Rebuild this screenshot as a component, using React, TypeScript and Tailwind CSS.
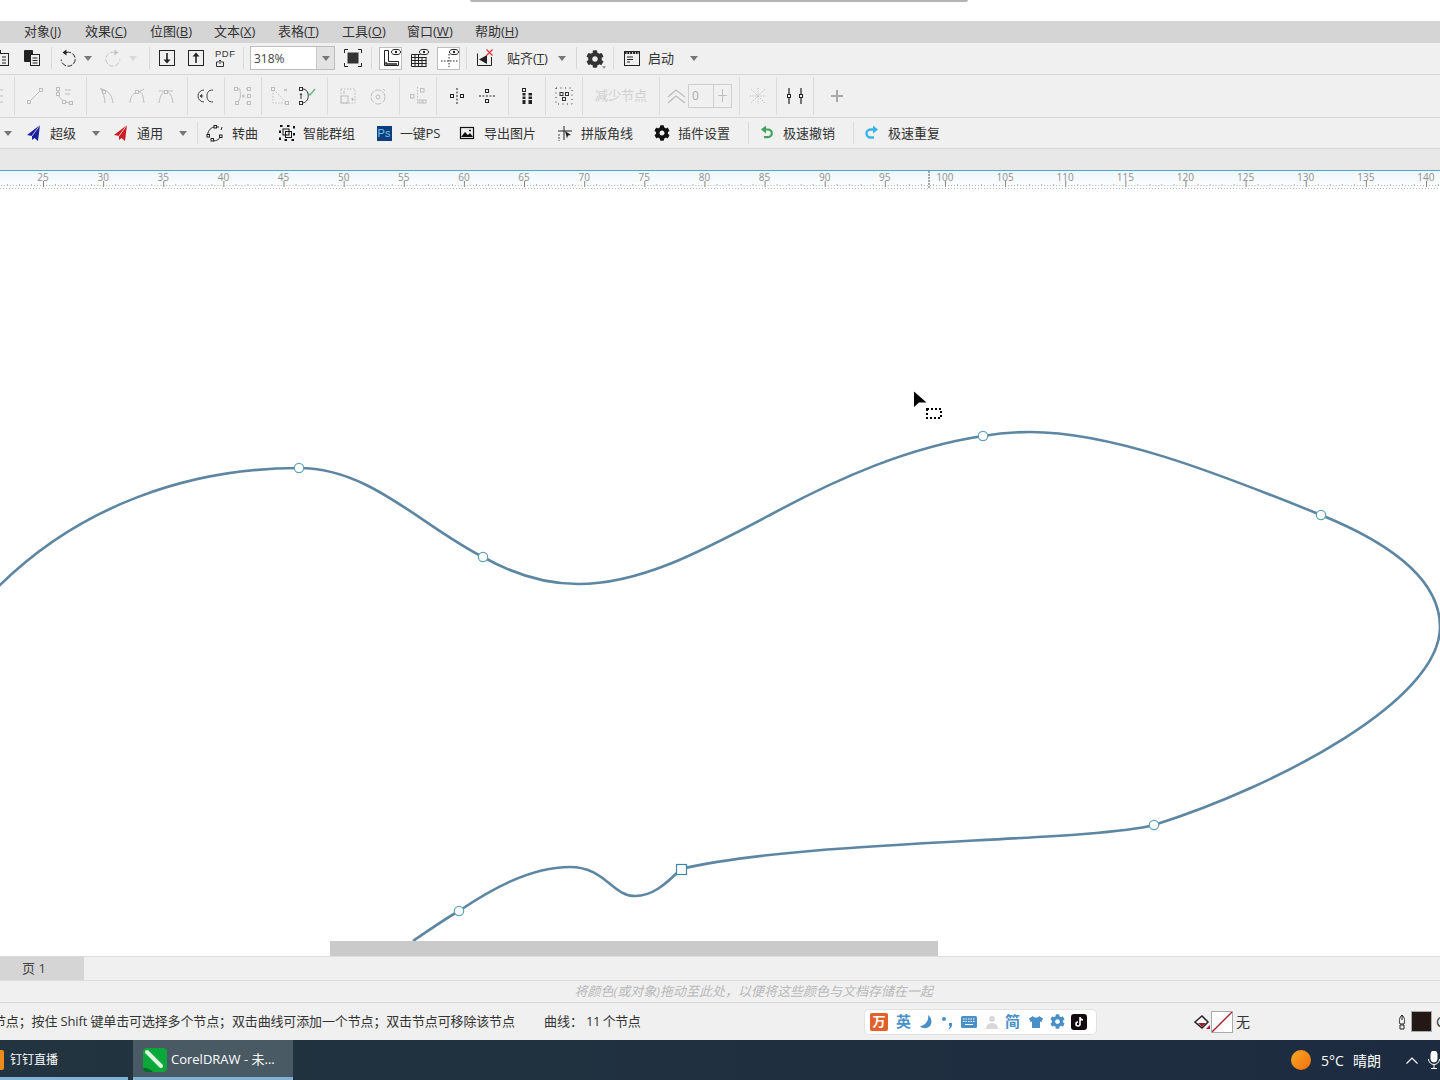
import type { ReactNode } from "react"
import { FaCog } from "react-icons/fa"

const menus = [
  { zh: "对象", key: "J", w: "w-[61px]" },
  { zh: "效果", key: "C", w: "w-[65px]" },
  { zh: "位图", key: "B", w: "w-[64px]" },
  { zh: "文本", key: "X", w: "w-[64px]" },
  { zh: "表格", key: "T", w: "w-[64px]" },
  { zh: "工具", key: "O", w: "w-[65px]" },
  { zh: "窗口", key: "W", w: "w-[68px]" },
  { zh: "帮助", key: "H", w: "w-[60px]" },
]

const rulerValues = Array.from({ length: 24 }, (_, i) => 25 + i * 5)

function Ico({ className = "", children }: { className?: string; children: ReactNode }) {
  return (
    <svg viewBox="0 0 20 20" fill="none" stroke="currentColor" className={`h-5 w-5 shrink-0 ${className}`}>
      {children}
    </svg>
  )
}

function Sep({ className = "" }: { className?: string }) {
  return <div className={`h-[22px] w-px shrink-0 bg-[#d9d9d9] ${className}`} />
}

function Sep2({ className = "" }: { className?: string }) {
  return <div className={`h-[38px] w-px shrink-0 bg-[#dcdcdc] ${className}`} />
}

function Drop({ className = "" }: { className?: string }) {
  return (
    <svg viewBox="0 0 8 5" className={`h-[5px] w-2 shrink-0 fill-current ${className}`}>
      <path d="M0 0h8L4 5z" />
    </svg>
  )
}

function Node({ x, y, s = 3 }: { x: number; y: number; s?: number }) {
  return <rect x={x - s / 2} y={y - s / 2} width={s} height={s} fill="#f0f0f0" />
}

function Eye() {
  return (
    <>
      <ellipse cx="15" cy="4" rx="4.5" ry="2.6" fill="#fff" strokeWidth="1" />
      <circle cx="15" cy="4" r="1.2" fill="currentColor" stroke="none" />
    </>
  )
}

function Plane({ className = "" }: { className?: string }) {
  return (
    <Ico className={className}>
      <path d="M16 2 L3 12 L8 13 L8 17 L10.5 15 L14 18 Z" fill="currentColor" stroke="none" />
      <path d="M16 2 L8 13" stroke="#fff" strokeWidth="0.7" />
    </Ico>
  )
}

function ToolText({ className = "", children }: { className?: string; children: ReactNode }) {
  return <span className={`shrink-0 whitespace-nowrap text-[13px] leading-none text-[#333] ${className}`}>{children}</span>
}

function MenuBar() {
  return (
    <div className="flex h-[22px] items-center bg-[#d5d5d5] pl-[24px] text-[13px] text-[#333]">
      {menus.map((m) => (
        <span key={m.zh} className={`${m.w} shrink-0 whitespace-nowrap`}>
          {m.zh}(<span className="underline">{m.key}</span>)
        </span>
      ))}
    </div>
  )
}

function TopToolbar() {
  return (
    <div className="flex h-[32px] items-center border-b border-[#d6d6d6] bg-[#f0f0f0] text-[#222]">
      <Ico className="-ml-[8px]">
        <rect x="2" y="2" width="7" height="10" fill="currentColor" stroke="none" />
        <rect x="7.5" y="5.5" width="9" height="12" fill="#f0f0f0" />
        <path d="M10 9h4M10 12h4M10 15h4" />
      </Ico>
      <Ico className="ml-[10px]">
        <rect x="2" y="2" width="9" height="12" rx="1" fill="currentColor" stroke="none" />
        <rect x="8.5" y="6.5" width="9" height="11" fill="#f0f0f0" />
        <path d="M10.5 10h5M10.5 12.5h5M10.5 15h5" />
      </Ico>
      <Sep className="ml-[9px]" />
      <Ico className="ml-[6px]">
        <path d="M8 4.5 A7 7 0 1 1 3.2 11.500" strokeDasharray="5 1.6" />
        <path d="M8.5 1.500 V7.5 L4.500 4.500 Z" fill="currentColor" stroke="none" />
      </Ico>
      <Drop className="ml-[6px] text-[#777]" />
      <Ico className="ml-[11px] text-[#c4c4c4]">
        <path d="M12 4.5 A7 7 0 1 0 16.8 11.500" strokeDasharray="5 1.6" />
        <path d="M11.5 1.500 V7.5 L15.500 4.500 Z" fill="currentColor" stroke="none" />
      </Ico>
      <Drop className="ml-[6px] text-[#d8d8d8]" />
      <Sep className="ml-[12px]" />
      <Ico className="ml-[7px]">
        <rect x="2.5" y="2.5" width="15" height="15" />
        <path d="M10 5v9" strokeWidth="1.6" />
        <path d="M6.5 11.5h7L10 15.5z" fill="currentColor" stroke="none" />
      </Ico>
      <Ico className="ml-[9px]">
        <rect x="2.5" y="2.5" width="15" height="15" />
        <path d="M10 15V6" strokeWidth="1.6" />
        <path d="M6.5 8.5h7L10 4.5z" fill="currentColor" stroke="none" />
      </Ico>
      <div className="relative ml-[8px] h-5 w-5 shrink-0">
        <span className="absolute left-[1px] top-[1px] font-['Liberation_Sans'] text-[9.5px] leading-none tracking-[0.5px] text-[#333]">PDF</span>
        <svg viewBox="0 0 8 8" fill="none" stroke="#333" className="absolute left-[2px] top-[11px] h-2 w-2">
          <path d="M.5 3v4.5h7V3M.5 3h2M5.5 3h2M4 5V1M2.5 2.5 4 1l1.5 1.5" />
        </svg>
      </div>
      <Sep className="ml-[9px]" />
      <div className="ml-[6px] flex h-[24px] w-[85px] shrink-0 border border-[#bdbdbd] bg-white">
        <span className="flex-1 pl-[3px] text-[12px] leading-[24px] text-[#444]">318%</span>
        <div className="flex w-[18px] items-center justify-center border-l border-[#c8c8c8] bg-[#e3e3e3]">
          <Drop className="text-[#777]" />
        </div>
      </div>
      <Ico className="ml-[8px]">
        <rect x="4.5" y="4.5" width="11" height="11" fill="#333" stroke="none" />
        <path d="M1.5 5V1.5H5M15 1.5h3.5V5M1.5 15v3.5H5M15 18.5h3.5V15" />
      </Ico>
      <Sep className="ml-[8px]" />
      <div className="ml-[7px] flex h-[23px] w-[23px] shrink-0 items-center justify-center border border-[#bdbdbd] bg-white">
        <Ico>
          <path d="M3.5 2.5v15h14v-4H7.5V2.5z" />
          <path d="M5 14v2h11" strokeWidth="1.4" />
          <Eye />
        </Ico>
      </div>
      <Ico className="ml-[7px]">
        <path d="M2.5 6.5h9M2.5 9.5h15M2.5 12.5h15M2.5 15.5h15M2.5 18.5h15M2.5 6.5v12M6 6.5v12M9.5 6.5v12M13 9.5v9M17 9.5v9" />
        <Eye />
      </Ico>
      <div className="ml-[8px] flex h-[23px] w-[23px] shrink-0 items-center justify-center border border-[#bdbdbd] bg-white">
        <Ico>
          <path d="M10 6v13M2 13h17" strokeDasharray="1.5 1.5" />
          <Eye />
        </Ico>
      </div>
      <Sep className="ml-[6px]" />
      <Ico className="ml-[8px]">
        <path d="M2.5 5.5v12h14V9" />
        <path d="M4 11.5l8-4.5v9z" fill="currentColor" stroke="none" />
        <path d="M11.5 1.5l6 6M17.5 1.5l-6 6" stroke="#d9383a" strokeWidth="1.2" />
      </Ico>
      <ToolText className="ml-[12px] w-[41px]">
        贴齐(<span className="underline">T</span>)
      </ToolText>
      <Drop className="ml-[10px] text-[#777]" />
      <Sep className="ml-[10px]" />
      <div className="relative ml-[8px] mt-[2px] flex h-5 w-5 shrink-0 items-center justify-center">
        <FaCog className="h-[18px] w-[18px] text-[#333]" />
        <Drop className="absolute -bottom-[1px] -right-[1px] h-[4px] w-[4px] text-[#888]" />
      </div>
      <Sep className="ml-[8px]" />
      <Ico className="ml-[8px]">
        <rect x="2.5" y="3.5" width="15" height="14" />
        <path d="M2.5 5h15" strokeWidth="2" strokeDasharray="2 0.8" />
        <path d="M5 9h6M5 11.5h6M5 14h3" />
      </Ico>
      <ToolText className="ml-[6px] w-[27px]">启动</ToolText>
      <Drop className="ml-[15px] text-[#777]" />
    </div>
  )
}

function NodeToolbar() {
  return (
    <div className="flex h-[43px] items-center border-b border-[#d6d6d6] bg-[#f0f0f0] text-[#bdbdbd]">
      <Ico className="-ml-[12px]">
        <path d="M12 4h3M12 10h3M12 16h3" />
      </Ico>
      <Sep2 className="ml-[6px]" />
      <Ico className="ml-[10px]">
        <path d="M4 16 16 4" />
        <Node x={4} y={16} />
        <Node x={16} y={4} />
      </Ico>
      <Ico className="ml-[10px]">
        <path d="M3 3c0 9 3 12 12 14" />
        <Node x={3} y={3} />
        <Node x={3} y={8} />
        <Node x={9} y={16} />
        <Node x={16} y={17} />
        <path d="M10 4h6M10 8h5" />
      </Ico>
      <Sep2 className="ml-[11px]" />
      <Ico className="ml-[10px]">
        <path d="M4 3c7 1 11 6 12 14M4 3c2 4 4 9 4 14M7 5 3 2" />
        <Node x={7} y={6} />
      </Ico>
      <Ico className="ml-[10px]">
        <path d="M3 17c0-6 3-10 8-11s5 5 6 11M8 8l9-5" />
        <Node x={10} y={6} />
      </Ico>
      <Ico className="ml-[9px]">
        <path d="M3 17C4 10 6 6 10 6s6 4 7 11M3 5h14" />
        <Node x={10} y={6} />
      </Ico>
      <Sep2 className="ml-[11px]" />
      <Ico className="ml-[8px] text-[#444]">
        <path d="M8 4a6 6 0 0 0 0 12M17 4c-5 0-6 3-6 6s1 6 6 6" />
        <path d="M4 10l2-1.5v3z" fill="currentColor" />
      </Ico>
      <Sep2 className="ml-[8px]" />
      <Ico className="ml-[8px]">
        <path d="M3 3h4c0 5 2 9-3 14M17 3h-4M17 17h-4" />
        <Node x={3} y={3} />
        <Node x={16} y={3} />
        <Node x={4} y={17} />
        <Node x={16} y={17} />
        <Node x={16} y={10} />
        <path d="M9 10l2-1.5v3z" />
      </Ico>
      <Sep2 className="ml-[8px]" />
      <Ico className="ml-[8px]">
        <path d="M3 4v13h14" strokeDasharray="1.5 1.5" />
        <path d="M4 4l13 13" strokeDasharray="1.5 1.5" />
        <Node x={3} y={3} />
        <Node x={17} y={17} />
        <path d="M14 3l3 2M17 3l-3 2" />
      </Ico>
      <Ico className="ml-[8px] text-[#333]">
        <path d="M3 3h2c6 0 8 12 0 14H3" />
        <Node x={3} y={3} />
        <Node x={3} y={17} />
        <path d="M3 8v5M2 9l1-1.5L4 9" />
        <path d="M10 7l2 2 5-6" stroke="#5db585" strokeWidth="1.2" />
      </Ico>
      <Sep2 className="ml-[9px]" />
      <Ico className="ml-[10px]">
        <rect x="3" y="3" width="14" height="14" strokeDasharray="1.5 1.5" />
        <rect x="3" y="10" width="7" height="7" />
        <path d="M6 5v3M13 13h3M14.5 12v3" />
      </Ico>
      <Ico className="ml-[10px]">
        <circle cx="10" cy="11" r="7" strokeDasharray="6 1.5" />
        <circle cx="10" cy="11" r="2" />
        <path d="M15 3l2 2" />
      </Ico>
      <Sep2 className="ml-[11px]" />
      <Ico className="ml-[8px]">
        <rect x="2.5" y="8.5" width="3.5" height="3.5" />
        <rect x="12.5" y="2.5" width="3.5" height="3.5" />
        <rect x="11" y="14" width="3" height="3" />
        <rect x="15" y="14" width="3" height="3" />
        <path d="M9.5 1v18" strokeDasharray="1.5 1.5" />
      </Ico>
      <Sep2 className="ml-[8px]" />
      <Ico className="ml-[10px] text-[#222]">
        <rect x="3.5" y="8.5" width="3" height="3" />
        <rect x="13.5" y="8.5" width="3" height="3" />
        <path d="M10 2v16" strokeDasharray="2 1.5" />
      </Ico>
      <Ico className="ml-[10px] text-[#222]">
        <rect x="8.5" y="3.5" width="3" height="3" />
        <rect x="8.5" y="13.5" width="3" height="3" />
        <path d="M2 10h16" strokeDasharray="2 1.5" />
      </Ico>
      <Sep2 className="ml-[11px]" />
      <Ico className="ml-[8px] text-[#222]">
        <rect x="5.5" y="2.5" width="3" height="3" />
        <rect x="5.5" y="7" width="3" height="11" fill="currentColor" stroke="none" />
        <rect x="11.5" y="7" width="3.5" height="11" fill="currentColor" stroke="none" />
        <path d="M5 10h4M5 13.5h4M11 10h5M11 13.5h5" stroke="#f0f0f0" />
      </Ico>
      <Sep2 className="ml-[8px]" />
      <Ico className="ml-[8px] text-[#333]">
        <rect x="6" y="6.5" width="3" height="3" />
        <rect x="11.5" y="6.5" width="3" height="3" />
        <rect x="8.5" y="11.5" width="3" height="3" />
        <path d="M2 2h16v16H2z" strokeDasharray="1 3.5" />
      </Ico>
      <Sep2 className="ml-[8px]" />
      <span className="ml-[12px] w-[53px] shrink-0 whitespace-nowrap text-[13px] text-[#cfcfcf]">减少节点</span>
      <Sep2 className="ml-[11px]" />
      <Ico className="ml-[7px]">
        <path d="M1 11l8-7 9 7M1 17l8-7 9 7" strokeWidth="1.3" />
      </Ico>
      <div className="ml-[1px] flex h-[24px] w-[44px] shrink-0 border border-[#cfcfcf]">
        <span className="flex-1 pl-[3px] text-[12px] leading-[22px] text-[#aaa]">0</span>
        <div className="flex w-[18px] items-center justify-center border-l border-[#cfcfcf]">
          <svg viewBox="0 0 9 15" fill="none" stroke="currentColor" className="h-[15px] w-[9px]">
            <path d="M4.5 1v13M0 7.5h9" />
          </svg>
        </div>
      </div>
      <Sep2 className="ml-[7px]" />
      <Ico className="ml-[8px]">
        <path d="M3 3l14 14M17 3 3 17M10 2v16M2 10h16" strokeDasharray="1.2 1.4" />
      </Ico>
      <Sep2 className="ml-[8px]" />
      <Ico className="ml-[8px] text-[#222]">
        <path d="M4 2v16M16 2v16" strokeWidth="1.2" />
        <rect x="2.5" y="8.5" width="3" height="3" fill="#f0f0f0" />
        <rect x="14.5" y="8.5" width="3" height="3" fill="#f0f0f0" />
      </Ico>
      <Sep2 className="ml-[8px]" />
      <Ico className="ml-[13px] text-[#aaa]">
        <path d="M10 4v12M4 10h12" strokeWidth="2" />
      </Ico>
    </div>
  )
}

function PluginToolbar() {
  return (
    <div className="flex h-[32px] items-center border-b border-[#d6d6d6] bg-[#f0f0f0]">
      <Drop className="ml-[4px] text-[#777]" />
      <Plane className="ml-[12px] text-[#1a1f9c]" />
      <ToolText className="ml-[6px] w-[26px]">超级</ToolText>
      <Drop className="ml-[16px] text-[#777]" />
      <Plane className="ml-[11px] text-[#cc1f24]" />
      <ToolText className="ml-[6px] w-[26px]">通用</ToolText>
      <Drop className="ml-[16px] text-[#777]" />
      <Sep className="ml-[10px]" />
      <Ico className="ml-[7px] text-[#222]">
        <path d="M9 4C5 5 2 9 3 13M6 17c4 2 8 0 10-4M14 4h-2M16 7l1-3" />
        <rect x="2" y="11.5" width="2.5" height="2.5" fill="#f0f0f0" />
        <rect x="6" y="15.5" width="2.5" height="2.5" fill="#f0f0f0" />
        <rect x="14.5" y="12" width="2.5" height="2.5" fill="#f0f0f0" />
        <rect x="9" y="2.5" width="2.5" height="2.5" fill="#f0f0f0" />
      </Ico>
      <ToolText className="ml-[7px] w-[26px]">转曲</ToolText>
      <Ico className="ml-[19px] text-[#111]">
        <rect x="6" y="6" width="6" height="6" />
        <rect x="8.5" y="8.5" width="6" height="6" />
        <path d="M3 3h14v14H3z" strokeWidth="2" strokeDasharray="2.5 4.5" />
      </Ico>
      <ToolText className="ml-[6px] w-[52px]">智能群组</ToolText>
      <div className="ml-[19px] flex h-5 w-5 shrink-0 items-center justify-center">
        <div className="flex h-[15px] w-[15px] items-center justify-center bg-[#0d3f7c] font-['Liberation_Sans'] text-[11px] leading-none text-[#6fc4f2]">Ps</div>
      </div>
      <ToolText className="ml-[6px] w-[40px] tracking-[-0.2px]">一键PS</ToolText>
      <Ico className="ml-[17px] text-[#111]">
        <rect x="3.5" y="4.5" width="13" height="11" strokeWidth="1.2" />
        <path d="M4 14l4-5 3 3 2-2 3 4z" fill="currentColor" stroke="none" />
        <circle cx="13" cy="7.5" r="1" fill="currentColor" stroke="none" />
      </Ico>
      <ToolText className="ml-[7px] w-[52px]">导出图片</ToolText>
      <Ico className="ml-[19px] text-[#222]">
        <path d="M3 8h14M9 3v14" strokeWidth="1" />
        <path d="M10 8l6 4-3 .5-1 3z" fill="currentColor" stroke="none" />
        <path d="M4 11v7" stroke="#999" strokeWidth="2" strokeDasharray="2 1" />
      </Ico>
      <ToolText className="ml-[6px] w-[52px]">拼版角线</ToolText>
      <div className="ml-[19px] flex h-5 w-5 shrink-0 items-center justify-center">
        <FaCog className="h-4 w-4 text-[#111]" />
      </div>
      <ToolText className="ml-[6px] w-[52px]">插件设置</ToolText>
      <Sep className="ml-[18px]" />
      <Ico className="ml-[8px] text-[#3da35d]">
        <path d="M8 6.500h3a3.800 3.800 0 0 1 0 7.600H7" strokeWidth="2.200" />
        <path d="M9 2.500V10.500L4 6.500z" fill="currentColor" stroke="none" />
      </Ico>
      <ToolText className="ml-[6px] w-[52px]">极速撤销</ToolText>
      <Sep className="ml-[18px]" />
      <Ico className="ml-[7px] text-[#35b6e6]">
        <path d="M13 6.500H9.500a4 4 0 0 0 0 8H13" strokeWidth="2.400" />
        <path d="M12 2.500V10.500L17 6.500z" fill="currentColor" stroke="none" />
      </Ico>
      <ToolText className="ml-[7px] w-[52px]">极速重复</ToolText>
    </div>
  )
}

function Ruler() {
  const minor = Array.from({ length: 490 }, (_, i) => i * 3.0065 + 43 - 60.13)
  return (
    <div className="relative h-[19px] shrink-0 overflow-hidden border-t border-[#4aa9c9] bg-gradient-to-b from-[#eef6fa] to-white">
      <div className="ml-[13px] flex">
        {rulerValues.map((v) => (
          <span key={v} className="w-[60.13px] shrink-0 text-center text-[10px] leading-[12px] text-[#8f8f8f]">
            {v}
          </span>
        ))}
      </div>
      <svg className="absolute inset-0 h-full w-full" viewBox="0 0 1440 18">
        {minor.map((x, i) => (
          <rect key={i} x={x} y={i % 20 === 0 ? 10 : i % 4 === 0 ? 13 : 14} width="1" height={i % 20 === 0 ? 6 : i % 4 === 0 ? 2 : 1} fill="#777" opacity={i % 20 === 0 ? 0.9 : 0.55} />
        ))}
        <path d="M929 0v17" stroke="#555" strokeDasharray="2 1" />
        <path d="M0 17.500h1440" stroke="#bbb" strokeDasharray="1 2" />
      </svg>
    </div>
  )
}

function Canvas() {
  const nodes = [
    [299, 468],
    [483, 557],
    [983, 436],
    [1321, 515],
    [1154, 825],
    [459, 911],
  ]
  return (
    <div className="relative h-[767px] shrink-0 overflow-hidden bg-white">
      <svg className="absolute inset-0 h-full w-full" viewBox="0 189 1440 767" fill="none">
        <path
          d="M-3 588C80 505 190 468 299 468C370 468 420 525 483 557C515 575 545 584 578 584C640 584 700 552 770 515C840 477 910 447 983 436C1000 433 1015 432 1030 432C1110 432 1210 470 1321 515C1390 543 1440 580 1440 627C1440 700 1280 785 1154 825C1090 842 800 840 681 869C665 885 652 896 635 896C612 896 605 867 570 867C530 867 490 890 459 911C443 920 428 931 413 941"
          stroke="#5d86a3"
          strokeWidth="2.600"
        />
        {nodes.map(([x, y]) => (
          <circle key={x} cx={x} cy={y} r="4.700" fill="#fff" stroke="#5fa3b5" strokeWidth="1.200" />
        ))}
        <rect x="676.500" y="864.500" width="10" height="10" fill="#fff" stroke="#3f88a8" strokeWidth="1.200" />
        <path d="M914 391.500V407L919 402.500H926.500Z" fill="#000" />
        <rect x="927" y="409" width="14" height="9" stroke="#000" strokeWidth="2" strokeDasharray="2 2" />
      </svg>
      <div className="absolute bottom-0 left-[330px] h-[15px] w-[608px] bg-[#cacaca]" />
    </div>
  )
}

function PageTabs() {
  return (
    <div className="flex h-[25px] border-y border-[#dcdcdc] bg-[#f0f0f0]">
      <div className="w-[84px] bg-[#d5d5d5] pl-[22px] text-[13px] leading-[23px] text-[#444]">页 1</div>
    </div>
  )
}

function ImeBar() {
  return (
    <div className="ml-[224px] flex h-[26px] w-[233px] shrink-0 items-center rounded-[5px] border border-[#e2e2e2] bg-white pl-[5px] text-[#4a90c8]">
      <div className="flex h-[18px] w-[18px] items-center justify-center rounded-[2px] bg-[#e2602a] text-[13px] font-bold leading-none text-white">万</div>
      <span className="ml-[8px] w-[16px] text-[15px] font-bold leading-none">英</span>
      <svg viewBox="0 0 16 16" className="ml-[6px] h-4 w-4 fill-current">
        <path d="M10 1c1 5-2 10-8 11 2 3 7 3 10 0 3-4 1-9-2-11z" />
      </svg>
      <svg viewBox="0 0 16 16" className="ml-[5px] h-4 w-4 fill-current">
        <circle cx="5" cy="5" r="2" />
        <path d="M10 9h3v2c0 2-1 3-3 4l-.5-1c1-.5 1.500-1 1.500-2h-1z" />
      </svg>
      <svg viewBox="0 0 16 14" className="ml-[6px] h-[14px] w-4 fill-current">
        <rect x="0" y="1" width="16" height="12" rx="1.500" />
        <path d="M2 4h12M2 6.500h12" stroke="#fff" strokeDasharray="1.500 1" />
        <path d="M4 9.500h8" stroke="#fff" />
      </svg>
      <svg viewBox="0 0 16 16" className="ml-[7px] h-4 w-4 fill-[#d9d9d9]">
        <circle cx="8" cy="5" r="3" />
        <path d="M2 15c0-4 3-6 6-6s6 2 6 6z" />
      </svg>
      <span className="ml-[5px] w-[16px] text-[15px] font-bold leading-none">简</span>
      <svg viewBox="0 0 16 16" className="ml-[7px] h-4 w-4 fill-current">
        <path d="M5 2 1 4.500l1.500 3.500L4 7.500V14h8V7.500l1.500.5L15 4.500 11 2c-1 2-5 2-6 0z" />
      </svg>
      <FaCog className="ml-[6px] h-[15px] w-[15px]" />
      <div className="ml-[6px] flex h-4 w-4 items-center justify-center rounded-[3px] bg-[#12080f]">
        <svg viewBox="0 0 12 12" fill="none" stroke="#fff" strokeWidth="1.600" className="h-3 w-3">
          <path d="M7 1v7a2 2 0 1 1-2-2M7 1.500c.3 1.500 1.300 2.300 3 2.500" />
        </svg>
      </div>
    </div>
  )
}

function StatusBar() {
  return (
    <div className="flex h-[38px] items-center overflow-hidden border-t border-[#d9d9d9] bg-[#f0f0f0] text-[13px] text-[#333]">
      <span className="-ml-[7px] w-[522px] shrink-0 whitespace-nowrap tracking-[-0.14px]">节点；按住 Shift 键单击可选择多个节点；双击曲线可添加一个节点；双击节点可移除该节点</span>
      <span className="ml-[29px] w-[42px] shrink-0 whitespace-nowrap">曲线：</span>
      <span className="w-[54px] shrink-0 whitespace-nowrap tracking-[-0.5px]">11 个节点</span>
      <ImeBar />
      <svg viewBox="0 0 16 16" fill="none" className="ml-[97px] h-4 w-4 shrink-0">
        <path d="M1 8l7-6 6 6-6 6z" stroke="#222" strokeWidth="1.500" fill="#fff" />
        <path d="M4 9h8l-4 4z" fill="#a51d2a" />
        <path d="M12 15l4-4v4z" fill="#a51d2a" />
      </svg>
      <svg viewBox="0 0 22 22" className="ml-[1px] h-[22px] w-[22px] shrink-0 border border-[#aaa] bg-white">
        <path d="M0 22 22 0" stroke="#a51d2a" strokeWidth="1.500" />
      </svg>
      <span className="ml-[3px] w-[162px] shrink-0 text-[14px]">无</span>
      <svg viewBox="0 0 10 16" fill="none" stroke="#222" className="-ml-[1px] h-4 w-[10px] shrink-0">
        <path d="M5 1c3 3 3 6 2 9H3C2 7 2 4 5 1zM5 1v5M3 11h4v4H3z" />
      </svg>
      <div className="ml-[4px] h-[21px] w-[21px] shrink-0 border border-[#aaa] bg-[#231815]" />
      <span className="ml-[4px] shrink-0 text-[14px]">C</span>
    </div>
  )
}

function Taskbar() {
  return (
    <div className="flex h-[40px] items-stretch overflow-hidden bg-gradient-to-r from-[#22343f] to-[#1d2b40] text-white">
      <div className="flex w-[128px] shrink-0 items-center border-b-[3px] border-[#7fb2d4] pt-[2px] text-[12px]">
        <div className="-ml-[4px] h-5 w-2 rounded-[2px] bg-[#f08a1d]" />
        <span className="ml-[6px] whitespace-nowrap">钉钉直播</span>
      </div>
      <div className="ml-[5px] flex w-[160px] shrink-0 items-center border-b-[3px] border-[#7fb2d4] bg-[#4a5a65] pl-[10px] pt-[2px] text-[13px]">
        <svg viewBox="0 0 24 24" className="h-6 w-6 shrink-0">
          <rect width="24" height="24" rx="4" fill="#0aa83a" />
          <path d="M0 20c6 0 8 2 10 4H4a4 4 0 0 1-4-4z" fill="#056b25" />
          <path d="M4 4l14 14" stroke="#dff5e0" strokeWidth="4" strokeLinecap="round" />
        </svg>
        <span className="ml-[4px] whitespace-nowrap">CorelDRAW - 未...</span>
      </div>
      <div className="ml-[998px] flex shrink-0 items-center text-[14px]">
        <div className="h-5 w-5 rounded-full bg-gradient-to-br from-[#f7a823] to-[#f26d0f]" />
        <span className="ml-[10px] w-[32px] whitespace-nowrap">5°C</span>
        <span className="w-[40px] whitespace-nowrap">晴朗</span>
        <svg viewBox="0 0 12 7" fill="none" stroke="#fff" strokeWidth="1.200" className="ml-[13px] h-[7px] w-3">
          <path d="M.5 6.500 6 1l5.500 5.500" />
        </svg>
        <svg viewBox="0 0 12 18" fill="none" stroke="#fff" className="ml-[10px] h-[18px] w-3 shrink-0">
          <rect x="3" y="0" width="6" height="11" rx="3" fill="#fff" />
          <path d="M.5 8a5.500 5.500 0 0 0 11 0M6 13.500V17M3 17.500h6" />
        </svg>
      </div>
    </div>
  )
}

export default function App() {
  return (
    <div className="flex h-[1080px] w-[1440px] flex-col overflow-hidden bg-white font-['Open_Sans','Noto_Sans_CJK_SC',sans-serif]">
      <div className="h-[21px] shrink-0">
        <div className="ml-[470px] h-[2px] w-[498px] rounded-b-[3px] bg-[#b4b4b4]" />
      </div>
      <MenuBar />
      <TopToolbar />
      <NodeToolbar />
      <PluginToolbar />
      <div className="h-[21px] shrink-0 bg-[#e8e8e8]" />
      <Ruler />
      <Canvas />
      <PageTabs />
      <div className="flex h-[21px] items-center justify-end bg-[#f0f0f0] pr-[507px] text-[13px] italic leading-none text-[#b8b8b8]">
        将颜色(或对象)拖动至此处，以便将这些颜色与文档存储在一起
      </div>
      <StatusBar />
      <Taskbar />
    </div>
  )
}
